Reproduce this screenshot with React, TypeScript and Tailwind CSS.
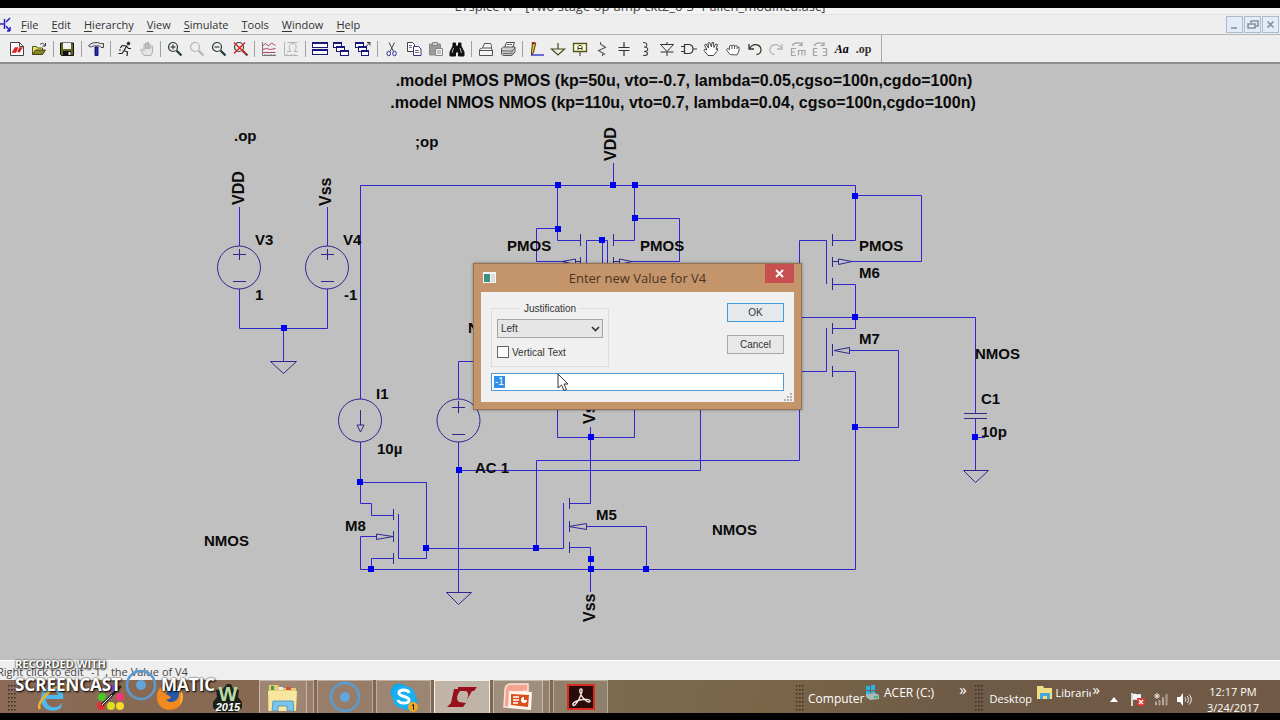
import React from "react";

type Kids = { children: React.ReactNode };

/* ---------- toolbar ---------- */

function Ico({ children }: Kids) {
  return (
    <svg viewBox="0 0 16 16" width="16" height="16" fill="none" stroke="#222" strokeWidth="1" aria-hidden="true">
      {children}
    </svg>
  );
}

const windowBox = (x: number, y: number, w: number, h: number) => (
  <g key={`${x}-${y}`}>
    <rect x={x} y={y} width={w} height={h} fill="#fff" stroke="#15157c" />
    <rect x={x} y={y} width={w} height="1" fill="#15157c" stroke="#15157c" />
  </g>
);

const lens = (c: string) => (
  <>
    <circle cx="6" cy="6" r="4.5" stroke={c} strokeWidth="1.2" />
    <path d="M9.5 9.5L14.5 14.5" stroke={c} strokeWidth="2.2" />
  </>
);

type Tool = { name: string; art: React.ReactNode } | null;

const tools: Tool[] = [
  {
    name: "New schematic",
    art: (
      <>
        <path d="M1.5 1.5h9l4 4v9h-13z" fill="#fff" stroke="#444" />
        <path d="M10.500 1.500v4h4" stroke="#444" />
        <path d="M3 11.500l3-5h3l-2 5zM8.500 10.500l2-4h3l-3 5z" fill="#d22" stroke="#d22" strokeWidth=".5" />
      </>
    ),
  },
  {
    name: "Open",
    art: (
      <>
        <path d="M1.5 13.500v-8h4l1 1.500h5v2.500" fill="#e8e070" stroke="#55551a" />
        <path d="M1.5 13.500l3-4.500h10l-3 4.500z" fill="#85852a" stroke="#44440c" />
        <path d="M9 3.500c2-2 4-1 5 1M14.500 2v3h-3" stroke="#333" />
      </>
    ),
  },
  null,
  {
    name: "Save",
    art: (
      <>
        <path d="M1.500 2h13v12.500h-12l-1-1z" fill="#66661a" stroke="#111" />
        <rect x="4" y="2" width="8" height="6" fill="#f4f4f4" stroke="none" />
        <rect x="4" y="10" width="8" height="5" fill="#111" stroke="none" />
        <rect x="9.500" y="11" width="2" height="3" fill="#eee" stroke="none" />
      </>
    ),
  },
  null,
  {
    name: "Control panel",
    art: (
      <>
        <path d="M.5 5c2-3 5-3.500 9-3.500l3 1 3 0v4h-2.500l-1.500-1.500h-5c-2 0-3 1-4 1z" fill="#dfe3e6" stroke="#444" />
        <path d="M7 6h3v8.500h-3z" fill="#2b2ba0" stroke="#15157c" />
      </>
    ),
  },
  null,
  {
    name: "Run",
    art: (
      <>
        <circle cx="11.500" cy="2.500" r="1.300" fill="#222" />
        <path d="M10 4.500L7 9.500l3.500 1.500-.5 4M7 9.500L5 12.500H1.500M5 4.500l4.500.5 2 2.500H14M5 4.500L3.500 7M2 9h2" strokeWidth="1.200" />
      </>
    ),
  },
  {
    name: "Halt",
    art: <path d="M5 14.500L1.500 9l1-1 2.500 2V3.500h1.500V8 2h1.500v6V1.500h1.500V8 3h1.500v5l1-3h1.500v6l-1.500 3.500z" fill="#e4e4e4" stroke="#b0b0b0" />,
  },
  null,
  { name: "Zoom in", art: <>{lens("#243a3a")}<path d="M3.500 6h5M6 3.500v5" /></> },
  { name: "Pan", art: lens("#b4b4b4") },
  { name: "Zoom out", art: <>{lens("#243a3a")}<path d="M3.500 6h5" /></> },
  { name: "Zoom full extents", art: <>{lens("#444")}<path d="M1 1.500L13 13M12 1.500L1 12.500" stroke="#d22" strokeWidth="1.500" /></> },
  null,
  {
    name: "Autorange",
    art: (
      <>
        <path d="M1.500 1v13.500H15M4 13v2M7 13v2M10 13v2M13 13v2" stroke="#777" />
        <path d="M1.500 5l3-2.500 3 2.500 3-3 4 2.500M1.500 8.500l4-1 4 1 5-1" stroke="#b0486a" />
        <path d="M1.500 11.500h13" stroke="#b0486a" />
      </>
    ),
  },
  {
    name: "Setup plot",
    art: <path d="M1.500 1v13.500H15M4.500 1.500h10M4 10.500h4c-3-3-2-8 2-8s4 6 1 8h4M4 13v2M8 13v2M12 13v2" stroke="#b4b4b4" />,
  },
  null,
  { name: "Tile windows", art: <>{windowBox(0.5, 1.5, 15, 5)}{windowBox(0.5, 8.5, 15, 5)}</> },
  { name: "Cascade windows", art: <>{windowBox(0.5, 1.5, 8, 5)}{windowBox(3.5, 5.5, 8, 5)}{windowBox(7.5, 9.5, 8, 5)}</> },
  {
    name: "Close windows",
    art: <>{windowBox(0.5, 1.5, 8, 5)}{windowBox(3.5, 5.5, 8, 5)}{windowBox(6.5, 9.5, 7, 5)}<path d="M11 5.500L15 1.500M12 1.500h3v3" stroke="#333" /></>,
  },
  null,
  {
    name: "Cut",
    art: (
      <>
        <path d="M5 1.500l4.500 9M10.500 1.500L6 10.500" stroke="#444" />
        <ellipse cx="4.700" cy="12.500" rx="1.800" ry="2.300" stroke="#30309a" />
        <ellipse cx="10.500" cy="12.500" rx="1.800" ry="2.300" stroke="#30309a" />
      </>
    ),
  },
  {
    name: "Copy",
    art: (
      <>
        <path d="M1.500 1.500h5l2 2v7h-7z" fill="#fff" stroke="#444" />
        <path d="M7.500 5.500h5l2.500 2.500v6.500h-7.500z" fill="#fff" stroke="#35357a" />
        <path d="M3 4.500h3M3 6.500h3M9 9.500h4M9 11.500h4" stroke="#777" />
      </>
    ),
  },
  {
    name: "Paste",
    art: (
      <>
        <path d="M1.500 3h11v11h-11z" fill="#9a9a9a" stroke="#8c8c8c" />
        <path d="M4.500 1.500h5v3h-5z" fill="#ccc" stroke="#888" />
        <path d="M7.500 7.500h7v7h-7z" fill="#eee" stroke="#888" />
        <path d="M9 10h4M9 12h4" stroke="#999" />
      </>
    ),
  },
  {
    name: "Find",
    art: (
      <>
        <path d="M4 2h2.500v3h3V2H12v3l3 6v4H9.500v-4h-3v4H1v-4l3-6z" fill="#111" stroke="#111" />
        <path d="M4.500 7L3 12M11 7l1.500 5" stroke="#ddd" strokeWidth=".8" />
      </>
    ),
  },
  null,
  {
    name: "Print preview",
    art: <path d="M1.500 14.500v-6l3-1.500 2-4.500h6l1 2V8l1 1v5.500zM1.500 9.500h13M5 7h8" fill="#f4f4f4" stroke="#555" />,
  },
  {
    name: "Print",
    art: (
      <>
        <path d="M4.500 6.500l2-5h8l-2 5" fill="#fff" stroke="#444" />
        <path d="M1.500 7.500l2-1.500h11.500v5l-3 3.500h-9l-1.500-1.500z" fill="#ccc" stroke="#555" />
        <path d="M2 10h10l3-3M3 12.500h8M7 3.500h5M12 10v4" stroke="#666" />
      </>
    ),
  },
  null,
  {
    name: "Draw wire",
    art: (
      <>
        <path d="M3 11L5.500 1.500l3 1L5 11.500l-2 2z" transform="rotate(-8 5 8)" fill="#e8c830" stroke="#55400a" />
        <path d="M3.500 1.500l3-.5.500 2-3 .5z" fill="#a22" stroke="none" />
        <path d="M3 14h13" stroke="#2525c0" strokeWidth="1.300" />
      </>
    ),
  },
  { name: "Ground", art: <path d="M8 2v6M1.500 8h13L8 14z" stroke="#444a18" strokeWidth="1.200" /> },
  {
    name: "Label net",
    art: (
      <>
        <path d="M1.500 2.500h13v8h-13z" fill="#fbfbd8" stroke="#55551a" strokeWidth="1.300" />
        <path d="M6 9V5.500l1-1h2l1 1V9M6 7.500h4M8 11v4" stroke="#333" />
      </>
    ),
  },
  { name: "Resistor", art: <path d="M6.500 1v2l5 3.500-7 3 6 3.500-2 .5V15" stroke="#555" strokeWidth="1.100" /> },
  { name: "Capacitor", art: <path d="M8 1v5M2.500 6.500h11M2.500 9.500h11M8 10v5" stroke="#333" strokeWidth="1.200" /> },
  { name: "Inductor", art: <path d="M6 1.500c5 0 5 4.500 1 4.500 5 0 5 4.500 0 4.500 5 0 5 4.500-1 4" stroke="#444" strokeWidth="1.100" /> },
  { name: "Diode", art: <path d="M8 1v3M1.500 3.500h13L8 10.500zM1.500 11h13M8 11v4" stroke="#333" /> },
  { name: "Component", art: <path d="M3.500 3.500h4c6 0 6 9 0 9h-4zM0 5.500h3.500M0 10.500h3.500M12 8h4" stroke="#333" strokeWidth="1.200" /> },
  {
    name: "Move",
    art: <path d="M5 14.500L1 9.500 2 8l2 1L1.500 4l1.500-1 2.500 4L5 2l1.500-.5L8.500 6l.5-4.500 1.500 0 .5 5 2-3.500 1.500.5-1.500 5 1.500-1v2l-4 5z" fill="#fff" stroke="#444" />,
  },
  {
    name: "Drag",
    art: <path d="M5 13.500L1.500 9l1-1.500 2 1V5L6 4l1 1 1.500-1 1.500 1 1.500-.5 1 1.500 1.500 0v4l-2 4zM7 5v3M9.500 5v3M12 6v2" fill="#fff" stroke="#555" />,
  },
  { name: "Undo", art: <path d="M2 3v5h5M2.500 7.500c3-5 9-5 11-1s-1 7-4 7" stroke="#333b22" strokeWidth="1.300" /> },
  { name: "Redo", art: <path d="M14 3v5H9M13.500 7.500c-3-5-9-5-11-1s1 7 4 7" stroke="#b4b4b4" strokeWidth="1.300" /> },
  { name: "Rotate", art: <path d="M2 5c2-4 8-4 10-1M12 1v3.500H8.500M6 7.500H1.500v7H6M1.500 11H5M8.500 14.500v-5h6.500v5M12 9.500v5" stroke="#a4a4a4" strokeWidth="1.200" /> },
  { name: "Mirror", art: <path d="M2 5c2-4 8-4 10-1M12 1v3.500H8.500M5.500 7.500H1.500v7h4M1.500 11H5M10.500 7.500h4v7h-4M14.500 11H11" stroke="#a4a4a4" strokeWidth="1.200" /> },
];

function Toolbar() {
  return (
    <div className="flex h-[29px] items-center border-b-2 border-[#8e8e8e] bg-[#eee]" role="toolbar" aria-label="Schematic tools">
      <div className="flex h-full w-[882px] items-center justify-between border-r border-[#a8a8a8] pr-[9px] pl-[9px]">
        {tools.map((t, i) =>
          t ? (
            <button key={i} type="button" aria-label={t.name} className="h-4 w-4 shrink-0">
              <Ico>{t.art}</Ico>
            </button>
          ) : (
            <span key={i} className="h-4 w-px shrink-0 bg-[#a0a0a0]" />
          ),
        )}
        <button type="button" aria-label="Text" className="h-4 w-4 shrink-0 font-['Liberation_Serif',serif] text-[12px] leading-4 font-bold text-black italic">
          Aa
        </button>
        <button type="button" aria-label="SPICE directive" className="h-4 w-4 shrink-0 font-['Liberation_Serif',serif] text-[12px] leading-[14px] font-bold text-[#333]">
          .op
        </button>
      </div>
    </div>
  );
}

/* ---------- menu ---------- */

const menus = ["File", "Edit", "Hierarchy", "View", "Simulate", "Tools", "Window", "Help"];

function MenuBar() {
  return (
    <div className="flex h-5 items-center border-b border-[#b4b4b4] bg-[#eee]">
      <svg width="12" height="18" viewBox="0 0 12 18" fill="none" stroke="#2a22c8" strokeWidth="1.500" aria-hidden="true">
        <path d="M0 8h4M4.500 3v10M6 6l4-4M6 10l4 5M10 15V11M10 15H7" />
      </svg>
      <nav className="flex flex-1 gap-[13px] pl-[9px] text-[11px] leading-4 text-[#333]" aria-label="Main menu">
        {menus.map((m) => (
          <button key={m} type="button">
            <span className="underline underline-offset-2">{m[0]}</span>
            {m.slice(1)}
          </button>
        ))}
      </nav>
      <div className="flex gap-px pr-px">
        {["M4 11h6", "M6 6V4h7v5h-3M3 7h7v4H3z", "M4.500 4.500l6 6M10.500 4.500l-6 6"].map((d, i) => (
          <button
            key={d}
            type="button"
            aria-label={["Minimize", "Restore", "Close"][i]}
            className="flex h-[17px] w-[17px] items-center justify-center border border-[#a9bacb] bg-[#e3ebf6]"
          >
            <svg width="15" height="15" viewBox="0 0 15 15" fill="none" stroke="#8593a3" strokeWidth="1.600" aria-hidden="true">
              <path d={d} />
            </svg>
          </button>
        ))}
      </div>
    </div>
  );
}

/* ---------- schematic ---------- */

const wires = [
  "M239.5 207V246M239.5 289V328.500H327.500V289M327.500 207V246M283.500 328V361",
  "M360.500 399V185.500H855.500V240.500H832M613.500 163V185M557.500 185V240.500H581M634.500 185V240.500H613",
  "M557 228.500H536.500V261.500H566M634 218.500H679.500V261.500H632M586.500 265V240.500H607.500V265M602.500 240V265",
  "M855 195.500H921.500V261.500H852M799.500 265V240.500H826.500V284M832 284.500H855.500V328.500H832M800 317.500H975.500V413",
  "M826.500 328V371.500H800M850 350.500H898.500V427.500H855M832 371.500H855.500V569.500H360.500V536.500H376",
  "M975.500 419V470M975 437.500H985M360.500 442V503.500H371.500V515.500H393M360 482.500H426.500V558.500H398.500V514",
  "M393 558.500H371.500V569M426 548.500H563.500V503M536.500 548V460.500H799.500V405M459 470.500H700.500V405",
  "M480 361.500H458.500V399M458.500 442V592M557.500 405V437.500H634.500V405M590.500 427V503.500H569M569 547.500H590.500V592",
  "M586 526.500H646.500V569",
];

const parts = [
  "M233 254.500H246M239.500 249V260M233 281.500H246M321 254.500H334M327.500 249V260M321 281.500H334",
  "M452 407.500H465M458.500 401V413M452 434.500H465M360.500 410V425M357 425H364L360.500 432Z",
  "M393.500 509V520M393.500 531V542M393.500 553V564M569.500 498V509M569.500 521V532M569.500 542V553",
  "M580.500 234V246M580.500 257V265M613.500 234V246M613.500 257V265M832.500 234V246M832.500 257V267M832.500 278V290",
  "M832.500 323V334M832.500 344V356M832.500 366V377M964 413.500H987M964 418.500H987",
  "M376.500 534V539.500L393 536.500ZM586.500 523.500V529.500L569 526.500ZM849.500 347.500V353.500L834 350.500Z",
  "M832 261.500H838M838.500 259V264.500L852 261.500ZM613 261.500H619M619.500 259V264.500L632 261.500ZM580 261.500H575M575.500 259V264.500L562 261.500Z",
  "M270.500 361.500H296.500L283.500 373.500ZM446.500 592.500H471.500L458.500 604.500ZM963.500 470.500H988.500L975.500 482.500Z",
];

const junctions = [
  [284, 328], [558, 185], [613, 185], [635, 185], [635, 218], [558, 229], [602, 240], [855, 196], [855, 317],
  [855, 427], [975, 437], [360, 482], [459, 470], [591, 437], [426, 548], [536, 548], [371, 569], [591, 559],
  [591, 569], [646, 569],
];

const labels: [number, number, string][] = [
  [234, 141, ".op"], [415, 147, ";op"], [255, 245, "V3"], [343, 245, "V4"], [255, 300, "1"], [344, 300, "-1"],
  [507, 251, "PMOS"], [640, 251, "PMOS"], [859, 251, "PMOS"], [859, 278, "M6"], [859, 344, "M7"],
  [975, 359, "NMOS"], [981, 404, "C1"], [981, 437, "10p"], [712, 535, "NMOS"], [204, 546, "NMOS"],
  [345, 531, "M8"], [376, 399, "I1"], [377, 454, "10µ"], [475, 473, "AC 1"], [596, 520, "M5"], [468, 333, "NMOS"],
];

const netLabels: [number, number, string][] = [
  [244, 205, "VDD"], [331, 206, "Vss"], [616, 161, "VDD"], [595, 424, "Vss"], [595, 622, "Vss"],
];

function Schematic() {
  return (
    <svg width="1280" height="596" viewBox="0 64 1280 596" className="block shrink-0" role="img" aria-label="Two stage op-amp schematic">
      <g fill="none" stroke="#3026cc" strokeWidth="1">
        {wires.map((d) => (
          <path key={d} d={d} />
        ))}
      </g>
      <g fill="none" stroke="#2f2790" strokeWidth="1">
        {parts.map((d) => (
          <path key={d} d={d} />
        ))}
        {[[239, 267.5], [327, 267.5], [360, 420.5], [458.5, 420.5]].map(([x, y]) => (
          <circle key={x} cx={x} cy={y} r="21.500" />
        ))}
      </g>
      <g fill="#0000f0">
        {junctions.map(([x, y]) => (
          <rect key={`${x},${y}`} x={x - 3} y={y - 3} width="6" height="6" />
        ))}
      </g>
      <g className="font-['Liberation_Sans',Arial,sans-serif] text-[15px] font-bold" fill="#0a0a0a">
        {labels.map(([x, y, s]) => (
          <text key={`${x},${y}`} x={x} y={y}>
            {s}
          </text>
        ))}
      </g>
      <g className="font-['Liberation_Sans',Arial,sans-serif] text-[16px] font-bold" fill="#0a0a0a">
        <text x="684" y="86" textAnchor="middle">.model PMOS PMOS (kp=50u, vto=-0.7, lambda=0.05,cgso=100n,cgdo=100n)</text>
        <text x="683" y="108" textAnchor="middle">.model NMOS NMOS (kp=110u, vto=0.7, lambda=0.04, cgso=100n,cgdo=100n)</text>
        {netLabels.map(([x, y, s]) => (
          <text key={`${x},${y}`} transform={`translate(${x} ${y}) rotate(-90)`}>
            {s}
          </text>
        ))}
      </g>
    </svg>
  );
}

/* ---------- dialog ---------- */

function ValueDialog() {
  return (
    <section
      role="dialog"
      aria-labelledby="dlg-title"
      className="absolute top-[199px] left-[473px] w-[329px] border border-[#96714f] bg-[#c4956b] px-[7px] pb-[7px] shadow-[0_0_3px_rgba(0,0,0,0.35)]"
    >
      <header className="flex h-7 items-start">
        <svg width="13" height="11" viewBox="0 0 13 11" className="mt-[8px] ml-[2px]" aria-hidden="true">
          <rect width="13" height="11" fill="#f4f4f4" />
          <rect x="1" y="2" width="6" height="8" fill="#3d8f84" />
          <rect x="8" y="2" width="4" height="8" fill="#dcdcdc" />
        </svg>
        <h2 id="dlg-title" className="flex-1 pt-[5px] pl-[14px] text-center text-[13px] leading-[18px] text-[#4a3423]">
          Enter new Value for V4
        </h2>
        <button type="button" aria-label="Close" className="flex h-[19px] w-[29px] items-center justify-center bg-[#c84f4f]">
          <svg width="9" height="9" viewBox="0 0 9 9" stroke="#fff" strokeWidth="1.800" aria-hidden="true">
            <path d="M1 1l7 7M8 1l-7 7" />
          </svg>
        </button>
      </header>
      <form
        onSubmit={(e) => e.preventDefault()}
        className="relative h-[110px] bg-[#f0f0f0] px-[10px] pt-[11px] font-['Liberation_Sans',Arial,sans-serif] text-[10px] text-[#333]"
      >
        <div className="flex h-[64px] items-start justify-between">
          <fieldset className="h-[64px] w-[118px] border border-[#dcdcdc] px-[5px]">
            <legend className="mx-auto px-1 leading-[11px]">Justification</legend>
            <div className="relative mt-[5px]">
              <select
                aria-label="Justification"
                defaultValue="Left"
                className="block h-[19px] w-full appearance-none border border-[#a5a5a5] bg-[#e6e6e6] px-[3px] leading-[17px]"
              >
                <option>Left</option>
                <option>Center</option>
                <option>Right</option>
              </select>
              <svg width="9" height="6" viewBox="0 0 9 6" fill="none" stroke="#333" strokeWidth="1.600" className="pointer-events-none absolute top-[7px] right-[3px]" aria-hidden="true">
                <path d="M1 1l3.500 3.500L8 1" />
              </svg>
            </div>
            <label className="mt-[8px] flex h-3 items-center gap-[3px] whitespace-nowrap">
              <input type="checkbox" className="h-3 w-3 appearance-none border border-[#666] bg-white" />
              Vertical Text
            </label>
          </fieldset>
          <div className="flex w-[57px] flex-col gap-[13px]">
            <button type="submit" className="h-[19px] border border-[#3f9be0] bg-[#e6e9ec] leading-[17px]">
              OK
            </button>
            <button type="button" className="h-[19px] border border-[#a8a8a8] bg-[#e8e8e8] leading-[17px]">
              Cancel
            </button>
          </div>
        </div>
        <div className="relative mt-[6px] h-[18px] border border-[#569ad2] bg-white">
          <input
            type="text"
            aria-label="New value"
            defaultValue="-1"
            className="block h-full w-full bg-transparent px-[2px] text-[10px] leading-4 text-transparent outline-none"
          />
          <mark className="pointer-events-none absolute top-[2px] left-[2px] h-3 bg-[#3390e8] px-px leading-3 text-white" aria-hidden="true">
            -1
          </mark>
        </div>
        <svg width="8" height="8" viewBox="0 0 8 8" fill="#b4b0ae" className="absolute right-[2px] bottom-[1px]" aria-hidden="true">
          <path d="M6 0h2v2H6zM3 3h2v2H3zM6 3h2v2H6zM0 6h2v2H0zM3 6h2v2H3zM6 6h2v2H6z" />
        </svg>
      </form>
      <svg width="12" height="19" viewBox="0 0 12 19" className="pointer-events-none absolute top-[109px] left-[83px]" aria-hidden="true">
        <path d="M1 1v14l3.500-3 2.500 5.500 2.500-1L7 11h4z" fill="#fff" stroke="#333" />
      </svg>
    </section>
  );
}

/* ---------- taskbar ---------- */

function Grip() {
  return (
    <svg width="8" height="33" viewBox="0 0 8 33" fill="#3a2f24" className="shrink-0" aria-hidden="true">
      {[5, 9, 13, 17, 21, 25, 29].map((y) => (
        <path key={y} d={`M0 ${y}h1.500v1.500H0zM3 ${y}h1.500v1.500H3zM6 ${y}h1.500v1.500H6z`} />
      ))}
    </svg>
  );
}

function FolderArt() {
  return (
    <svg width="32" height="28" viewBox="0 0 32 28" aria-hidden="true">
      <path d="M2 2h9l2 3h16v23H1z" fill="#e6cd72" />
      <path d="M4 3h3v4H4z" fill="#3aa04a" />
      <path d="M12 4h4v3h-4z" fill="#e8f0f8" />
      <path d="M19 4h5v3h-5z" fill="#d8503c" />
      <path d="M1 8h29l-1 20H2z" fill="#f8e6a0" />
      <path d="M5 28l1-10h20l1 10h-7v-5h-9v5z" fill="#7cc4ea" stroke="#3a8fc4" strokeWidth=".8" />
    </svg>
  );
}

function TargetArt() {
  return (
    <svg width="32" height="32" viewBox="0 0 32 32" fill="none" aria-hidden="true">
      <circle cx="16" cy="16" r="14" stroke="#5b9bd0" strokeWidth="2.600" />
      <circle cx="16" cy="16" r="5" fill="#62a4dc" />
    </svg>
  );
}

const launchers = [
  {
    name: "Internet Explorer",
    art: (
      <svg width="34" height="32" viewBox="0 0 34 32" fill="none" aria-hidden="true">
        <path d="M27 18H10c0 9 11 11 16 4l-1 5c-8 6-20 2-20-9S14 4 20 6c6 1 8 7 7 12z" fill="#4fb9ee" />
        <path d="M11 14c1-6 10-6 11 0z" fill="#86674f" />
        <path d="M4 28C-1 22 17 4 29 4c3 0 3 3 1 6" stroke="#f0b428" strokeWidth="2.500" />
      </svg>
    ),
  },
  {
    name: "Paint palette",
    art: (
      <svg width="34" height="32" viewBox="0 0 34 32" aria-hidden="true">
        <circle cx="8" cy="16" r="4" fill="#48c828" />
        <circle cx="17" cy="7" r="4" fill="#7a48c8" />
        <circle cx="26" cy="16" r="4" fill="#f03878" />
        <circle cx="7" cy="25" r="4" fill="#e03030" />
        <circle cx="17" cy="25" r="4" fill="#d8e020" />
        <circle cx="26" cy="25" r="4" fill="#f8d828" />
        <path d="M8 24L27 5" stroke="#222" strokeWidth="2.500" />
        <path d="M8 24L18 14" stroke="#f8f8f8" strokeWidth="1" />
      </svg>
    ),
  },
  {
    name: "Firefox",
    art: (
      <svg width="34" height="32" viewBox="0 0 34 32" aria-hidden="true">
        <circle cx="17" cy="16" r="13" fill="#e86a1c" />
        <circle cx="18" cy="13" r="9" fill="#2458a8" />
        <path d="M4 12l3-5 3 3 5-2-2 5 5 3c-1 3-4 2-5 3 3 3 9 3 12-2 2-4 1-9-2-13 8 5 9 15 3 21S5 30 4 18z" fill="#f08a20" />
        <path d="M25 6c6 5 6 14 1 19 3-7 3-14-1-19z" fill="#fbc83a" />
      </svg>
    ),
  },
];

function Watcom() {
  return (
    <svg width="34" height="32" viewBox="0 0 34 32" aria-hidden="true">
      <path d="M16 3l4 0 2 5 6 1-1 7 4 5v6l-5 4H7l-5-4v-6l4-5-1-7 7-1z" fill="#1c201a" />
      <text x="17" y="20" textAnchor="middle" fill="#b6dca6" className="font-['Liberation_Sans',sans-serif] text-[20px] font-bold">W</text>
      <text x="17" y="30" textAnchor="middle" fill="#fff" className="font-['Liberation_Sans',sans-serif] text-[11px] font-bold italic">2015</text>
    </svg>
  );
}

const running = [
  { name: "File Explorer", w: "w-[48px]", stack: true, bg: "bg-white/20 border-white/40", art: <FolderArt /> },
  { name: "Screencast", w: "w-[56px]", stack: false, bg: "bg-white/15 border-white/35", art: <TargetArt /> },
  {
    name: "Skype",
    w: "w-[55px]",
    stack: false,
    bg: "bg-white/20 border-white/35",
    art: (
      <svg width="32" height="30" viewBox="0 0 32 30" aria-hidden="true">
        <circle cx="11" cy="10" r="8.500" fill="#10a8e8" />
        <circle cx="21" cy="20" r="8.500" fill="#10a8e8" />
        <circle cx="16" cy="15" r="11.500" fill="#18b0f0" />
        <path d="M21 11c-1-4-10-4-10 0s10 3 10 7-10 4-11 0" fill="none" stroke="#fff" strokeWidth="3" />
        <circle cx="25" cy="25" r="5" fill="#f0a828" />
        <path d="M24 23.500l1.500-1V28" fill="none" stroke="#222" />
      </svg>
    ),
  },
  {
    name: "LTspice",
    w: "w-[56px]",
    stack: false,
    bg: "bg-white/50 border-white/80",
    art: (
      <svg width="30" height="22" viewBox="0 0 30 22" fill="#97101c" aria-hidden="true">
        <path d="M7 3h8C11 6 8 13 12 16l7 1-3 4H0l4-4z" />
        <path d="M11 1h19l-3 4h-2L17 19c4-6 6-12 2-14h-8z" />
      </svg>
    ),
  },
  {
    name: "PowerPoint",
    w: "w-[50px]",
    stack: true,
    bg: "bg-white/25 border-white/40",
    art: (
      <svg width="30" height="28" viewBox="0 0 30 28" aria-hidden="true">
        <path d="M2 8c0-4 2-7 6-7h17v7l-17 2v14H1z" fill="#f4a48e" stroke="#fbe4dc" strokeWidth="1.500" />
        <path d="M6 8l23 1-1 18-23-2z" fill="#fff4ee" />
        <path d="M8 11l18 1-1 12-17-2z" fill="#d8501c" />
        <path d="M10 14h6M10 17h6M10 20h5" stroke="#fff" strokeWidth="1.500" />
        <circle cx="21" cy="17" r="3" fill="#fff" />
        <path d="M21 17V13h4v4z" fill="#d8501c" />
      </svg>
    ),
  },
  {
    name: "Adobe Acrobat",
    w: "w-[55px]",
    stack: false,
    bg: "bg-white/15 border-white/35",
    art: (
      <svg width="28" height="26" viewBox="0 0 28 26" aria-hidden="true">
        <rect x="1" y="1" width="26" height="24" fill="#2d0a0a" stroke="#d82c20" strokeWidth="2" />
        <path d="M14 5c-3 0 0 7 3 10s6 4 6 2-6-2-10-1-8 3-7 5 5-3 7-8 3-8 1-8z" fill="none" stroke="#f4e8e4" strokeWidth="1.400" />
      </svg>
    ),
  },
];

function Taskbar() {
  return (
    <footer className="flex h-[33px] items-center justify-between overflow-hidden bg-[linear-gradient(100deg,#8b6b57_0%,#85674f_28%,#7c6a50_48%,#7a6549_60%,#6f5a47_75%,#705a45_100%)] text-white">
      <div className="flex h-full items-center">
        <div className="flex h-full w-[259px] items-center pl-[8px]">
          <Grip />
          <div className="flex flex-1 justify-between pr-[14px] pl-[20px]">
            {launchers.map((l) => (
              <button key={l.name} type="button" aria-label={l.name}>
                {l.art}
              </button>
            ))}
            <button type="button" aria-label="Watcom 2015">
              <Watcom />
            </button>
          </div>
        </div>
        <div className="flex h-full gap-[3px]">
          {running.map((r) => (
            <div key={r.name} className="flex">
              <button type="button" aria-label={r.name} className={`flex h-[33px] items-center justify-center border border-b-0 ${r.w} ${r.bg}`}>
                {r.art}
              </button>
              {r.stack && <span className="w-[7px] border-t border-r border-white/40 bg-white/15" />}
            </div>
          ))}
        </div>
      </div>
      <div className="flex h-full w-[484px] items-center text-[11px] leading-4 whitespace-nowrap">
        <Grip />
        <span className="mt-1 ml-1 w-[57px] text-[12px]">Computer</span>
        <button type="button" className="mb-2 flex items-center gap-1 text-[12px]">
          <svg width="15" height="15" viewBox="0 0 15 15" aria-hidden="true">
            <path d="M1 1h4v4H1zM6 0h4v5H6zM1 6h4v4H1zM6 6h4v4H6z" fill="#2cb4e8" />
            <path d="M1 9l9-1 4 2v4l-9 1-4-3z" fill="#a8b8b8" />
            <path d="M9 11h4v2H9z" fill="#3ac060" />
          </svg>
          ACER (C:)
        </button>
        <span className="mb-4 ml-auto text-[15px]">»</span>
        <span className="ml-[8px]">
          <Grip />
        </span>
        <span className="mt-1 ml-[7px] w-[47px]">Desktop</span>
        <svg width="15" height="13" viewBox="0 0 15 13" className="mb-2 shrink-0" aria-hidden="true">
          <path d="M0 0h6l1 2h8v11H0z" fill="#f2dc84" />
          <path d="M3 13V7h10v6h-3v-3H6v3z" fill="#48a8dc" />
        </svg>
        <span className="mb-2 ml-[4px] w-[35px] overflow-hidden">Librarie</span>
        <span className="mb-4 ml-[2px] text-[15px]">»</span>
        <div className="ml-[10px] flex items-center gap-[9px] pt-[5px]">
          <svg width="8" height="5" viewBox="0 0 8 5" fill="#fff" aria-hidden="true">
            <path d="M4 0l4 5H0z" />
          </svg>
          <svg width="14" height="15" viewBox="0 0 14 15" className="ml-1" aria-hidden="true">
            <path d="M1 1v13" stroke="#fff" strokeWidth="1.500" />
            <path d="M2 2c3-1 3 1 8 0v6c-4 1-5-1-8 0z" fill="#f4f4f4" />
            <rect x="6" y="6" width="8" height="8" fill="#d83838" />
            <path d="M8 8l4 4M12 8l-4 4" stroke="#fff" strokeWidth="1.300" />
          </svg>
          <svg width="14" height="13" viewBox="0 0 14 13" fill="none" stroke="#e8e0d8" aria-hidden="true">
            <path d="M3 0v6M0 3h6M1 1l4 4M5 1L1 5" strokeWidth="1" />
            <path d="M1.500 9h1v3h-1zM5 7.500h1V12H5zM8.500 4.500h1V12h-1zM12 1.500h1V12h-1z" strokeWidth=".8" stroke="#c8beb2" />
          </svg>
          <svg width="15" height="13" viewBox="0 0 15 13" fill="none" stroke="#fff" aria-hidden="true">
            <path d="M0 4h3l3-4v13l-3-4H0z" fill="#fff" stroke="none" />
            <path d="M8 4.500c1 1 1 3 0 4M10 3c2 2 2 5 0 7M12 1.500c3 3 3 7 0 10" />
          </svg>
        </div>
        <time className="mr-[6px] flex w-[82px] flex-col items-center pt-[6px]">
          <span>12:17 PM</span>
          <span>3/24/2017</span>
        </time>
      </div>
    </footer>
  );
}

function Watermark() {
  return (
    <div className="pointer-events-none absolute bottom-[14px] left-[15px] font-['Open_Sans',sans-serif] font-bold text-white [text-shadow:1px_1px_2px_#000,0_0_2px_#222]">
      <div className="text-[11px] leading-[14px]">RECORDED WITH</div>
      <div className="flex h-7 items-center text-[17px] leading-7">
        SCREENCAST
        <span className="mx-[4px]">
          <TargetArt />
        </span>
        MATIC
      </div>
    </div>
  );
}

export default function App() {
  return (
    <div className="relative flex min-h-screen flex-col overflow-hidden border-y-8 border-black bg-[#c0c0c0] font-['Open_Sans','Noto_Sans',sans-serif]">
      <div className="flex h-[7px] items-end justify-center overflow-hidden border-b border-[#e2e2e2] bg-[#f2f2f2]">
        <h1 className="text-[13px] leading-4 text-[#444]">LTspice IV - [Two stage op-amp ckt2_6-3 -Pallen_modified.asc]</h1>
      </div>
      <MenuBar />
      <Toolbar />
      <main className="relative flex flex-1 overflow-hidden bg-[#c0c0c0]">
        <Schematic />
        <ValueDialog />
      </main>
      <div className="h-5 border-t border-white bg-[#efefef]">
        <p className="-ml-[3px] pt-[3px] text-[11px] leading-4 text-[#444]">Right click to edit &quot;-1&quot;, the Value of V4</p>
      </div>
      <Taskbar />
      <Watermark />
    </div>
  );
}
